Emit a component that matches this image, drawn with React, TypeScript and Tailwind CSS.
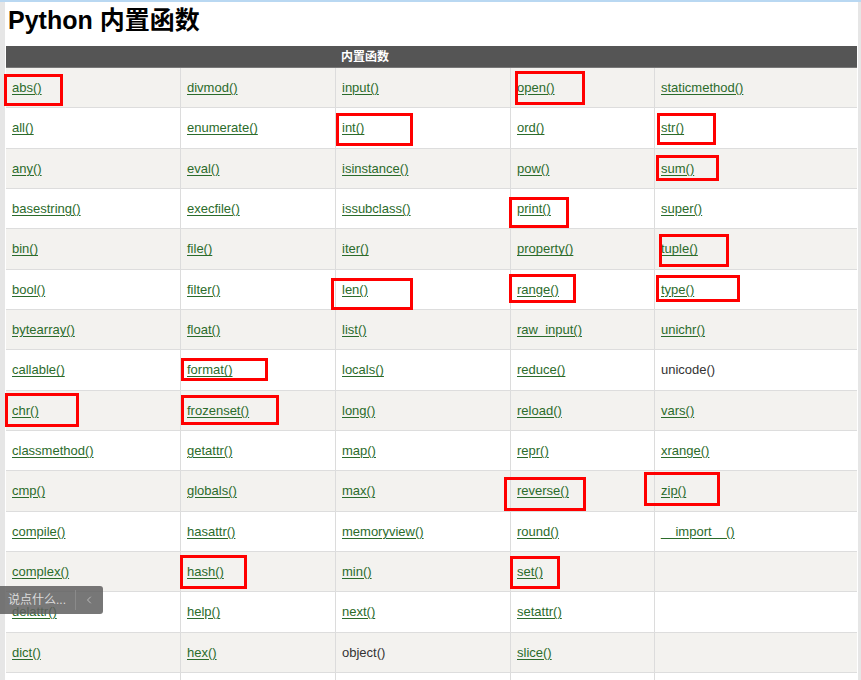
import { ChevronLeft } from 'lucide-react';

type Cell = { name: string; link?: boolean };

const L = (name: string): Cell => ({ name, link: true });
const P = (name: string): Cell => ({ name, link: false });
const E: Cell = { name: '' };

const rows: Cell[][] = [
  [L('abs()'), L('divmod()'), L('input()'), L('open()'), L('staticmethod()')],
  [L('all()'), L('enumerate()'), L('int()'), L('ord()'), L('str()')],
  [L('any()'), L('eval()'), L('isinstance()'), L('pow()'), L('sum()')],
  [L('basestring()'), L('execfile()'), L('issubclass()'), L('print()'), L('super()')],
  [L('bin()'), L('file()'), L('iter()'), L('property()'), L('tuple()')],
  [L('bool()'), L('filter()'), L('len()'), L('range()'), L('type()')],
  [L('bytearray()'), L('float()'), L('list()'), L('raw_input()'), L('unichr()')],
  [L('callable()'), L('format()'), L('locals()'), L('reduce()'), P('unicode()')],
  [L('chr()'), L('frozenset()'), L('long()'), L('reload()'), L('vars()')],
  [L('classmethod()'), L('getattr()'), L('map()'), L('repr()'), L('xrange()')],
  [L('cmp()'), L('globals()'), L('max()'), L('reverse()'), L('zip()')],
  [L('compile()'), L('hasattr()'), L('memoryview()'), L('round()'), L('__import__()')],
  [L('complex()'), L('hash()'), L('min()'), L('set()'), E],
  [L('delattr()'), L('help()'), L('next()'), L('setattr()'), E],
  [L('dict()'), L('hex()'), P('object()'), L('slice()'), E],
  [E, E, E, E, E],
];

// red annotation boxes drawn over the table
const marks = [
  'left-[4px] top-[74px] w-[59px] h-[32px]',
  'left-[515px] top-[71px] w-[70px] h-[34px]',
  'left-[336px] top-[113px] w-[77px] h-[33px]',
  'left-[657px] top-[113px] w-[59px] h-[32px]',
  'left-[656px] top-[155px] w-[63px] h-[26px]',
  'left-[509px] top-[197px] w-[60px] h-[31px]',
  'left-[659px] top-[234px] w-[70px] h-[33px]',
  'left-[331px] top-[278px] w-[82px] h-[32px]',
  'left-[509px] top-[274px] w-[67px] h-[29px]',
  'left-[656px] top-[275px] w-[84px] h-[27px]',
  'left-[181px] top-[358px] w-[87px] h-[23px]',
  'left-[5px] top-[393px] w-[74px] h-[34px]',
  'left-[181px] top-[395px] w-[98px] h-[30px]',
  'left-[504px] top-[477px] w-[82px] h-[34px]',
  'left-[644px] top-[472px] w-[76px] h-[34px]',
  'left-[180px] top-[555px] w-[67px] h-[34px]',
  'left-[510px] top-[556px] w-[50px] h-[33px]',
];

const font = { fontFamily: '"Liberation Sans", Arial, "Noto Sans CJK SC", sans-serif' };

export default function App() {
  return (
    <div className="relative w-[861px] h-[680px] overflow-hidden bg-white" style={font}>
      <div className="h-[2px] bg-[#b9d8f2]" />
      <div className="flex h-[678px]">
        <div className="w-[5px] shrink-0 bg-[#e6e6e6]" />
        <div className="flex-1 pl-px">
          <h1 className="h-[44px] pl-[2px] pt-[4px] text-[25px] leading-[29px] font-bold text-black">
            Python 内置函数
          </h1>
          <div className="w-[851px]">
            <div className="grid h-[22px] grid-cols-[175px_155px_175px_144px_202px] items-center border-b border-[#777] bg-[#555555] text-[12px] font-bold text-white">
              <div />
              <div />
              <div className="pl-[5px]">内置函数</div>
              <div />
              <div />
            </div>
            {rows.map((row, i) => (
              <div
                key={i}
                className={`grid h-[40.33px] grid-cols-[175px_155px_175px_144px_202px] border-b border-[#dddddd] ${
                  i % 2 === 0 ? 'bg-[#f3f2ef]' : 'bg-white'
                }`}
              >
                {row.map((c, j) => (
                  <div
                    key={j}
                    className={`flex items-center pl-[6px] text-[13px] ${j < 4 ? 'border-r border-[#dcdcdc]' : ''}`}
                  >
                    {c.link ? (
                      <a href="#" className="text-[#2b6b2b] underline underline-offset-2">
                        {c.name}
                      </a>
                    ) : (
                      <span className="text-[#333]">{c.name}</span>
                    )}
                  </div>
                ))}
              </div>
            ))}
          </div>
        </div>
        <div className="w-[3px] shrink-0 bg-[#e6e6e6]" />
      </div>

      {marks.map((m, i) => (
        <div key={i} className={`absolute border-[3px] border-[#ff0000] ${m}`} />
      ))}

      <div className="absolute left-0 top-[586px] flex h-[28px] w-[103px] items-center rounded-r-[3px] bg-[#5f5f5f]/85 text-[12px] text-[#dcdcdc]">
        <span className="pl-[8px]">说点什么...</span>
        <div className="ml-[9px] h-[20px] w-px bg-[#8a8a8a]" />
        <ChevronLeft className="ml-[7px] h-[12px] w-[12px] text-[#d0d0d0]" strokeWidth={1.5} />
      </div>
    </div>
  );
}
